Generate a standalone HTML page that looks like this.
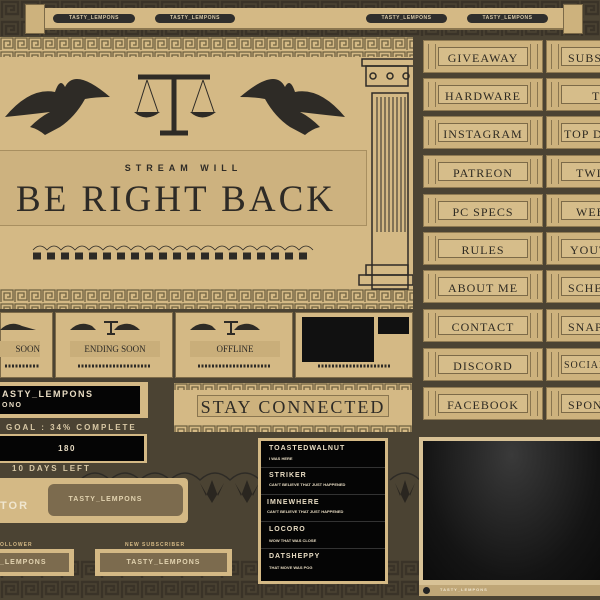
<!DOCTYPE html>
<html><head><style>
*{margin:0;padding:0;box-sizing:border-box}
body{width:600px;height:600px;overflow:hidden;background:#4b4333;position:relative;font-family:"Liberation Serif",serif}
.a{position:absolute}
.tan{background:#d4b985}
.pill{position:absolute;height:9px;background:#2f2e2c;border-radius:5px;color:#d8c9a8;font:bold 5px "Liberation Sans",sans-serif;letter-spacing:.5px;line-height:9px;text-align:center}
.btn{position:absolute;height:33px;background:#cdb27d;border:1px solid #8f7a52;overflow:hidden}
.btn span{position:absolute;left:14px;right:14px;top:6px;bottom:6px;border:1px solid #7c6a48;background:#d6bd8a;font:12px "Liberation Serif",serif;color:#2e2a22;text-align:center;line-height:20px;letter-spacing:1px;white-space:nowrap;overflow:hidden}
.btn:before,.btn:after{content:"";position:absolute;top:3px;bottom:3px;width:6px;border-left:1px solid #8a7650;border-right:1px solid #8a7650}
.btn:before{left:4px}.btn:after{right:4px}
.blk{background:#050505;color:#e8dcc3;font-family:"Liberation Sans",sans-serif;font-weight:bold;letter-spacing:1.5px}
.lt{color:#d9c9a6;font:bold 9px "Liberation Sans",sans-serif;letter-spacing:2px}
</style></head><body>
<svg class="a" style="left:0;top:0" width="600" height="600">
<defs>
<pattern id="mk" width="20" height="20" patternUnits="userSpaceOnUse">
<rect width="20" height="20" fill="#4b4333"/>
<path d="M2 18V2H18V14H6V6H14V10H10" fill="none" stroke="#3a3328" stroke-width="2.5"/>
</pattern>
<pattern id="gk" width="14" height="14" patternUnits="userSpaceOnUse">
<rect width="14" height="14" fill="#d4b985"/>
<path d="M1 13V1H13V11H4V4H10V8H7" fill="none" stroke="#6f6040" stroke-width="1.3"/>
</pattern>
</defs>
<rect width="600" height="600" fill="#4b4333"/>
<rect y="0" width="600" height="36" fill="url(#mk)"/>
<rect y="560" width="420" height="40" fill="url(#mk)"/>
</svg>
<div class="a tan" style="left:25px;top:8px;width:555px;height:22px;border-bottom:2px solid #8a7650"></div>
<div class="a" style="left:25px;top:4px;width:20px;height:30px;background:#cdb27d;border:1px solid #7c6a48"></div>
<div class="a" style="left:563px;top:4px;width:20px;height:30px;background:#cdb27d;border:1px solid #7c6a48"></div>
<div class="pill" style="left:53px;top:14px;width:82px">TASTY_LEMPONS</div>
<div class="pill" style="left:155px;top:14px;width:80px">TASTY_LEMPONS</div>
<div class="pill" style="left:366px;top:14px;width:81px">TASTY_LEMPONS</div>
<div class="pill" style="left:467px;top:14px;width:81px">TASTY_LEMPONS</div>
<div class="a" style="left:0;top:37px;width:413px;height:272px;background:#d4b985"></div>
<svg class="a" style="left:0;top:37px" width="413" height="272">
<rect width="413" height="20" fill="url(#gk)"/>
<rect y="251" width="413" height="21" fill="url(#gk)"/>
<rect x="362" y="22" width="52" height="7" fill="#d4b985" stroke="#2e2b26" stroke-width="1.5"/>
<rect x="366" y="29" width="42" height="20" fill="none" stroke="#2e2b26" stroke-width="1.5"/>
<circle cx="373" cy="39" r="3" fill="none" stroke="#2e2b26" stroke-width="1.5"/><circle cx="390" cy="39" r="3" fill="none" stroke="#2e2b26" stroke-width="1.5"/><circle cx="406" cy="39" r="3" fill="none" stroke="#2e2b26" stroke-width="1.5"/>
<rect x="372" y="56" width="36" height="196" fill="none" stroke="#2e2b26" stroke-width="1.5"/>
<path d="M377 60V195M381 60V195M385 60V195M389 60V195M393 60V195M397 60V195M401 60V195M405 60V195" stroke="#2e2b26" stroke-width="1"/>
<rect x="366" y="228" width="42" height="10" fill="none" stroke="#2e2b26" stroke-width="1.5"/>
<rect x="359" y="238" width="54" height="10" fill="none" stroke="#2e2b26" stroke-width="1.5"/>
<path d="M138 40H210M174 40V96M160 96H188" stroke="#2e2b26" stroke-width="5" fill="none"/>
<path d="M134 75Q146 86 160 75ZM190 75Q202 86 216 75Z" fill="#2e2b26"/>
<path d="M147 43L137 75M147 43L158 75M203 43L192 75M203 43L214 75" stroke="#2e2b26" stroke-width="1"/>
<g fill="#2e2b26">
<path d="M5 80Q30 50 55 55Q60 40 65 50Q75 30 110 60Q95 60 85 62Q75 80 60 90L45 98Q38 92 30 90Q40 80 50 75Q25 78 5 80Z"/>
<path d="M345 80Q320 50 295 55Q290 40 285 50Q275 30 240 60Q255 60 265 62Q275 80 290 90L305 98Q312 92 320 90Q310 80 300 75Q325 78 345 80Z"/>
</g>
<path d="M33 219H308" stroke="#2e2b26" stroke-width="7" stroke-dasharray="8 6"/>
<path d="M33 213Q40 205 47 213Q54 205 61 213Q68 205 75 213Q82 205 89 213Q96 205 103 213Q110 205 117 213Q124 205 131 213Q138 205 145 213Q152 205 159 213Q166 205 173 213Q180 205 187 213Q194 205 201 213Q208 205 215 213Q222 205 229 213Q236 205 243 213Q250 205 257 213Q264 205 271 213Q278 205 285 213Q292 205 299 213Q306 205 313 213" stroke="#2e2b26" fill="none" stroke-width=".8"/>
</svg>
<div class="a" style="left:0;top:150px;width:367px;height:76px;background:#cdb27f;border:1px solid #a88f60;border-left:none"></div>
<div class="a" style="left:0;top:163px;width:367px;text-align:center;font:bold 9px 'Liberation Sans',sans-serif;letter-spacing:5px;color:#2e2b26">STREAM WILL</div>
<div class="a" style="left:0;top:178px;width:352px;text-align:center;font:37px 'Liberation Serif',serif;color:#2e2b26;letter-spacing:3px">BE RIGHT BACK</div>
<div class="a tan" style="left:0;top:312px;width:53px;height:66px;border:1px solid #7c6a48"></div>
<div class="a tan" style="left:55px;top:312px;width:118px;height:66px;border:1px solid #7c6a48"></div>
<div class="a tan" style="left:175px;top:312px;width:118px;height:66px;border:1px solid #7c6a48"></div>
<div class="a tan" style="left:295px;top:312px;width:118px;height:66px;border:1px solid #7c6a48"></div>
<div class="a" style="left:0;top:341px;width:40px;height:16px;background:#c9ae7a;font:9px serif;color:#2e2b26;text-align:right;line-height:16px">SOON</div>
<div class="a" style="left:70px;top:341px;width:90px;height:16px;background:#c9ae7a;font:9px serif;color:#2e2b26;text-align:center;line-height:16px">ENDING SOON</div>
<div class="a" style="left:190px;top:341px;width:90px;height:16px;background:#c9ae7a;font:9px serif;color:#2e2b26;text-align:center;line-height:16px">OFFLINE</div>
<div class="a" style="left:302px;top:317px;width:72px;height:45px;background:#111"></div>
<div class="a" style="left:378px;top:317px;width:31px;height:17px;background:#111"></div>
<svg class="a" style="left:0;top:318px" width="413" height="60" fill="#2e2b26">
<path d="M70 12Q80 2 92 8L96 12ZM140 12Q130 2 118 8L114 12ZM190 12Q200 2 212 8L216 12ZM260 12Q250 2 238 8L234 12ZM0 12Q10 2 22 8L36 12Z"/>
<path d="M104 4H118M111 4V16M107 16H115M224 4H238M231 4V16M227 16H235" stroke="#2e2b26" stroke-width="2"/>
<path d="M5 48H40M78 48H150M198 48H270M318 48H390" stroke="#2e2b26" stroke-width="3" stroke-dasharray="2 1.5"/>
</svg>
<div class="a tan" style="left:0;top:382px;width:148px;height:36px"></div>
<div class="a blk" style="left:0;top:386px;width:140px;height:28px;font-size:9px;padding:3px 0 0 2px;line-height:10px">ASTY_LEMPONS<br><span style="font-size:7px">ONO</span></div>
<div class="a lt" style="left:6px;top:423px;font-size:8px">GOAL : 34% COMPLETE</div>
<div class="a tan" style="left:0;top:434px;width:147px;height:29px"></div>
<div class="a blk" style="left:0;top:436px;width:144px;height:25px;font-size:8px;text-align:center;line-height:25px;padding-right:10px">180</div>
<svg class="a" style="left:0;top:468px" width="420" height="45">
<path d="M80 12Q95 -2 110 12Q125 -2 140 12Q155 -2 170 12Q185 -2 200 12Q215 -2 230 12Q245 -2 260 12M390 12Q405 -2 420 12" stroke="#2e2b26" fill="none" stroke-width="1.5"/>
<g fill="#2a2620"><path d="M200 15L212 35L224 15L218 28L212 12L206 28Z"/><path d="M235 15L247 35L259 15L253 28L247 12L241 28Z"/><path d="M395 15L405 35L415 15L410 28L405 12L400 28Z"/></g>
</svg>
<div class="a lt" style="left:12px;top:464px;font-size:8px">10 DAYS LEFT</div>
<div class="a tan" style="left:0;top:478px;width:188px;height:45px;border-radius:0 4px 4px 0"></div>
<div class="a" style="left:48px;top:484px;width:135px;height:32px;background:#7c6b4e;border-radius:6px;color:#e2d3b0;font:bold 7px 'Liberation Sans',sans-serif;letter-spacing:1px;text-align:center;line-height:32px;padding-right:20px">TASTY_LEMPONS</div>
<div class="a" style="left:0;top:500px;font:bold 11px 'Liberation Sans',sans-serif;color:#f0e6cf;letter-spacing:2px">TOR</div>
<div class="a tan" style="left:0;top:549px;width:74px;height:27px"></div>
<div class="a" style="left:0;top:553px;width:69px;height:19px;background:#7c6b4e;color:#e2d3b0;font:bold 7px 'Liberation Sans',sans-serif;letter-spacing:1px;line-height:19px">_LEMPONS</div>
<div class="a" style="left:0;top:542px;font:bold 5px 'Liberation Sans',sans-serif;color:#d4b985;letter-spacing:1px">OLLOWER</div>
<div class="a tan" style="left:95px;top:549px;width:137px;height:27px"></div>
<div class="a" style="left:100px;top:553px;width:127px;height:19px;background:#7c6b4e;color:#e2d3b0;font:bold 7px 'Liberation Sans',sans-serif;letter-spacing:1px;line-height:19px;text-align:center">TASTY_LEMPONS</div>
<div class="a" style="left:125px;top:542px;font:bold 5px 'Liberation Sans',sans-serif;color:#d4b985;letter-spacing:1px">NEW SUBSCRIBER</div>
<div class="a" style="left:174px;top:383px;width:238px;height:49px;background:#d4b985"></div>
<svg class="a" style="left:174px;top:383px" width="238" height="49"><rect width="238" height="7" fill="url(#gk)"/><rect y="42" width="238" height="7" fill="url(#gk)"/></svg>
<div class="a" style="left:197px;top:395px;width:192px;height:22px;border:1px solid #8a7650;background:#cdb27d;font:18px 'Liberation Serif',serif;color:#2e2b26;text-align:center;line-height:22px;letter-spacing:2px">STAY CONNECTED</div>
<div class="a" style="left:258px;top:438px;width:130px;height:146px;background:#d4b985"></div>
<div class="a" style="left:261px;top:441px;width:124px;height:140px;background:#050505"></div>
<div class="a" style="left:261px;top:441px;width:124px;color:#e8dcc3;font-family:'Liberation Sans',sans-serif;font-weight:bold">
<div style="height:27px;padding:4px 0 0 8px;border-bottom:1px solid #333"><div style="font-size:7px;letter-spacing:1px">TOASTEDWALNUT</div><div style="font-size:4px;margin-top:4px">I WAS HERE</div></div>
<div style="height:27px;padding:4px 0 0 8px;border-bottom:1px solid #333"><div style="font-size:7px;letter-spacing:1px">STRIKER</div><div style="font-size:4px;margin-top:3px">CAN'T BELIEVE THAT JUST HAPPENED</div></div>
<div style="height:27px;padding:4px 0 0 6px;border-bottom:1px solid #333"><div style="font-size:7px;letter-spacing:1px">IMNEWHERE</div><div style="font-size:4px;margin-top:3px">CAN'T BELIEVE THAT JUST HAPPENED</div></div>
<div style="height:27px;padding:4px 0 0 8px;border-bottom:1px solid #333"><div style="font-size:7px;letter-spacing:1px">LOCORO</div><div style="font-size:4px;margin-top:5px">WOW THAT WAS CLOSE</div></div>
<div style="height:27px;padding:4px 0 0 8px"><div style="font-size:7px;letter-spacing:1px">DATSHEPPY</div><div style="font-size:4px;margin-top:5px">THAT MOVE WAS POG</div></div>
</div>
<div class="a" style="left:419px;top:437px;width:181px;height:148px;background:#d8c296"></div>
<div class="a" style="left:423px;top:441px;width:177px;height:139px;background:radial-gradient(ellipse at 50% 10%,#3a3a3a,#141414 70%,#0c0c0c)"></div>
<div class="a" style="left:419px;top:585px;width:181px;height:11px;background:#bfa677"></div>
<div class="a" style="left:423px;top:587px;width:7px;height:7px;border-radius:50%;background:#222"></div>
<div class="a" style="left:440px;top:587px;font:bold 4px 'Liberation Sans',sans-serif;color:#f0e6cf;letter-spacing:1px">TASTY_LEMPONS</div>
<div class="btn" style="left:423px;top:40px;width:120px"><span>GIVEAWAY</span></div>
<div class="btn" style="left:423px;top:78px;width:120px"><span>HARDWARE</span></div>
<div class="btn" style="left:423px;top:116px;width:120px"><span>INSTAGRAM</span></div>
<div class="btn" style="left:423px;top:155px;width:120px"><span>PATREON</span></div>
<div class="btn" style="left:423px;top:194px;width:120px"><span>PC SPECS</span></div>
<div class="btn" style="left:423px;top:232px;width:120px"><span>RULES</span></div>
<div class="btn" style="left:423px;top:270px;width:120px"><span>ABOUT ME</span></div>
<div class="btn" style="left:423px;top:309px;width:120px"><span>CONTACT</span></div>
<div class="btn" style="left:423px;top:348px;width:120px"><span>DISCORD</span></div>
<div class="btn" style="left:423px;top:387px;width:120px"><span>FACEBOOK</span></div>
<div class="btn" style="left:546px;top:40px;width:70px"><span style="text-align:left;padding-left:6px">SUBSCRIBE</span></div>
<div class="btn" style="left:546px;top:78px;width:70px"><span style="text-align:left;padding-left:30px">TIPS</span></div>
<div class="btn" style="left:546px;top:116px;width:70px"><span style="text-align:left;padding-left:2px">TOP DONOR</span></div>
<div class="btn" style="left:546px;top:155px;width:70px"><span style="text-align:left;padding-left:14px">TWITCH</span></div>
<div class="btn" style="left:546px;top:194px;width:70px"><span style="text-align:left;padding-left:14px">WEBSITE</span></div>
<div class="btn" style="left:546px;top:232px;width:70px"><span style="text-align:left;padding-left:8px">YOUTUBE</span></div>
<div class="btn" style="left:546px;top:270px;width:70px"><span style="text-align:left;padding-left:6px">SCHEDULE</span></div>
<div class="btn" style="left:546px;top:309px;width:70px"><span style="text-align:left;padding-left:6px">SNAPCHAT</span></div>
<div class="btn" style="left:546px;top:348px;width:70px"><span style="text-align:left;padding-left:2px;font-size:10px">SOCIALS</span></div>
<div class="btn" style="left:546px;top:387px;width:70px"><span style="text-align:left;padding-left:6px">SPONSORS</span></div>
</body></html>
